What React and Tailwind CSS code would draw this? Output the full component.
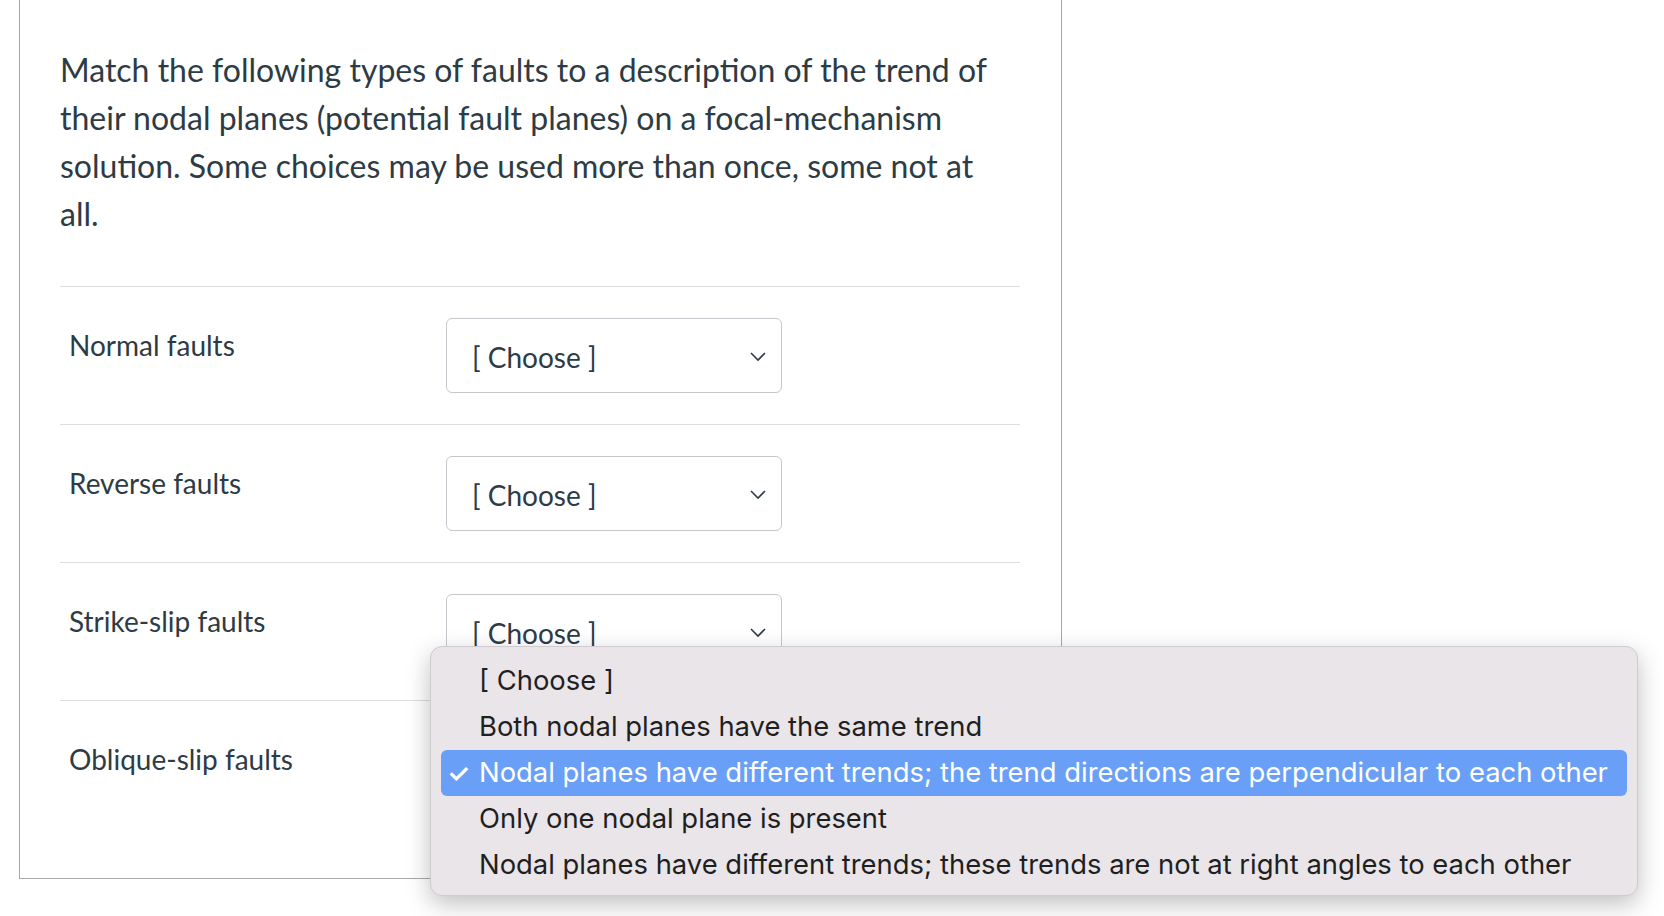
import React from 'react';

const rows = ['Normal faults', 'Reverse faults', 'Strike-slip faults', 'Oblique-slip faults'];

const options = [
  '[ Choose ]',
  'Both nodal planes have the same trend',
  'Nodal planes have different trends; the trend directions are perpendicular to each other',
  'Only one nodal plane is present',
  'Nodal planes have different trends; these trends are not at right angles to each other',
];

// Fake select box (closed state)
const SelectBox = () => (
  <div className="w-[336px] h-[75px] border border-[#c4c8cc] rounded-[6px] bg-white flex items-center justify-between pl-[25px] pr-[14px]">
    <span className="text-[28px] text-[#2d3b45] pt-[2px]">[ Choose ]</span>
    <svg width="18" height="12" viewBox="0 0 18 12" fill="none">
      <path d="M2 3 L9 10 L16 3" stroke="#2d3b45" strokeWidth="1.6" />
    </svg>
  </div>
);

export default function App() {
  return (
    <div className="relative w-[1664px] h-[916px] overflow-hidden bg-white" style={{ fontFamily: 'Lato, "Noto Sans", sans-serif' }}>
      <div className="ml-[19px] w-[1043px] border-x border-b border-[#a9a9a9] pl-[40px] pr-[41px] pt-[46px] pb-[40px]">
        <p className="max-w-[945px] text-[32px] leading-[48px] text-[#2d3b45] mb-[48px]">
          Match the following types of faults to a description of the trend of their nodal planes (potential fault planes) on a focal-mechanism solution. Some choices may be used more than once, some not at all.
        </p>
        {rows.map((label) => (
          <div key={label} className="border-t border-[#dcdfe2] flex py-[31px]">
            <div className="w-[386px] pl-[9px] pt-[3px] text-[28px] leading-[48px] text-[#2d3b45]">{label}</div>
            <SelectBox />
          </div>
        ))}
      </div>

      {/* native select menu popup */}
      <div
        className="absolute left-[430px] top-[646px] w-[1208px] h-[250px] rounded-[12px] bg-[#e9e5e9] border border-[#cfcbcf] shadow-[0_8px_24px_rgba(0,0,0,0.25)] px-[10px] pt-[11px]"
        style={{ fontFamily: 'Inter, "Liberation Sans", sans-serif' }}
      >
        {options.map((opt, i) => {
          const selected = i === 2;
          return (
            <div
              key={opt}
              className={
                'relative h-[46px] flex items-center pl-[38px] rounded-[6px] text-[27.4px] ' +
                (selected ? 'bg-[#6a9ff7] text-white' : 'text-[#1f1f1f]')
              }
            >
              {selected && <span className="absolute left-[6px] text-[26px] font-semibold">✓</span>}
              {opt}
            </div>
          );
        })}
      </div>
    </div>
  );
}
